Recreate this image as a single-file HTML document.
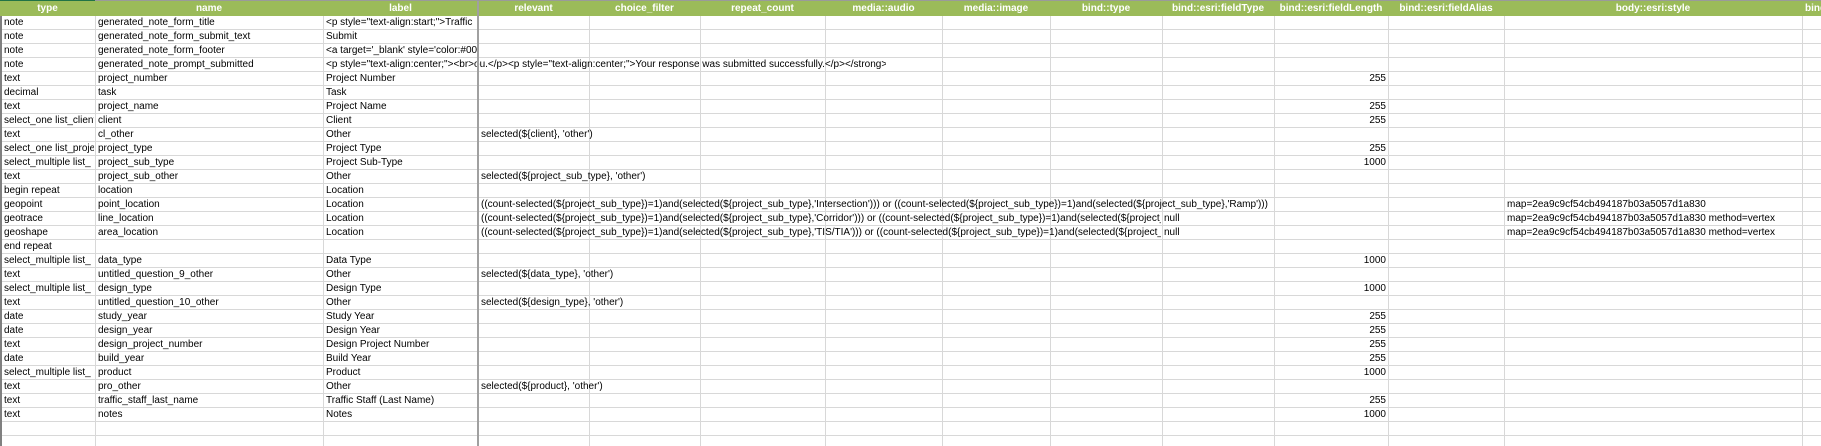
<!DOCTYPE html>
<html><head><meta charset="utf-8"><style>
html,body{margin:0;padding:0;background:#fff;width:1821px;height:446px;overflow:hidden;position:relative}
.h{position:absolute;top:1px;height:15px;background:#9bbb59;color:#fff;font:bold 10px "Liberation Sans",sans-serif;line-height:15px;text-align:center;white-space:nowrap;overflow:hidden}
.v{position:absolute;top:16px;bottom:0;width:1px;background:#d8d8d8}
.t{position:absolute;height:13px;line-height:13px;font:10px "Liberation Sans",sans-serif;color:#000;white-space:nowrap;overflow:hidden}
.r{text-align:right}
#grid{position:absolute;left:0;top:16px;width:1821px;height:430px;background:repeating-linear-gradient(to bottom,transparent 0,transparent 13px,#d8d8d8 13px,#d8d8d8 14px)}
</style></head><body>
<div id="grid"></div>
<div style="position:absolute;left:0;top:0;width:1821px;height:1px;background:#9a9a9a"></div>
<div style="position:absolute;left:0;top:0;width:95px;height:1px;background:#217346"></div>
<div class="h" style="left:0;width:95px">type</div>
<div class="h" style="left:95px;width:228px">name</div>
<div class="h" style="left:323px;width:155px">label</div>
<div class="h" style="left:478px;width:111px">relevant</div>
<div class="h" style="left:589px;width:111px">choice_filter</div>
<div class="h" style="left:700px;width:125px">repeat_count</div>
<div class="h" style="left:825px;width:117px">media::audio</div>
<div class="h" style="left:942px;width:108px">media::image</div>
<div class="h" style="left:1050px;width:112px">bind::type</div>
<div class="h" style="left:1162px;width:112px">bind::esri:fieldType</div>
<div class="h" style="left:1274px;width:114px">bind::esri:fieldLength</div>
<div class="h" style="left:1388px;width:116px">bind::esri:fieldAlias</div>
<div class="h" style="left:1504px;width:298px">body::esri:style</div>
<div class="h" style="left:1802px;width:19px;text-align:left;padding-left:3px">bind</div>
<div class="v" style="left:95px"></div><div class="v" style="left:323px"></div>
<div class="v" style="left:589px"></div><div class="v" style="left:700px"></div><div class="v" style="left:825px"></div>
<div class="v" style="left:942px"></div><div class="v" style="left:1050px"></div><div class="v" style="left:1162px"></div>
<div class="v" style="left:1274px"></div><div class="v" style="left:1388px"></div><div class="v" style="left:1504px"></div><div class="v" style="left:1802px"></div>
<div style="position:absolute;left:0;top:16px;width:2px;bottom:0;background:#808080"></div>

<div class="t" style="left:4px;width:90px;top:17px">note</div>
<div class="t" style="left:4px;width:90px;top:31px">note</div>
<div class="t" style="left:4px;width:90px;top:45px">note</div>
<div class="t" style="left:4px;width:90px;top:59px">note</div>
<div class="t" style="left:4px;width:90px;top:73px">text</div>
<div class="t" style="left:4px;width:90px;top:87px">decimal</div>
<div class="t" style="left:4px;width:90px;top:101px">text</div>
<div class="t" style="left:4px;width:90px;top:115px">select_one list_client</div>
<div class="t" style="left:4px;width:90px;top:129px">text</div>
<div class="t" style="left:4px;width:90px;top:143px">select_one list_project</div>
<div class="t" style="left:4px;width:90px;top:157px">select_multiple list_</div>
<div class="t" style="left:4px;width:90px;top:171px">text</div>
<div class="t" style="left:4px;width:90px;top:185px">begin repeat</div>
<div class="t" style="left:4px;width:90px;top:199px">geopoint</div>
<div class="t" style="left:4px;width:90px;top:213px">geotrace</div>
<div class="t" style="left:4px;width:90px;top:227px">geoshape</div>
<div class="t" style="left:4px;width:90px;top:241px">end repeat</div>
<div class="t" style="left:4px;width:90px;top:255px">select_multiple list_</div>
<div class="t" style="left:4px;width:90px;top:269px">text</div>
<div class="t" style="left:4px;width:90px;top:283px">select_multiple list_</div>
<div class="t" style="left:4px;width:90px;top:297px">text</div>
<div class="t" style="left:4px;width:90px;top:311px">date</div>
<div class="t" style="left:4px;width:90px;top:325px">date</div>
<div class="t" style="left:4px;width:90px;top:339px">text</div>
<div class="t" style="left:4px;width:90px;top:353px">date</div>
<div class="t" style="left:4px;width:90px;top:367px">select_multiple list_</div>
<div class="t" style="left:4px;width:90px;top:381px">text</div>
<div class="t" style="left:4px;width:90px;top:395px">text</div>
<div class="t" style="left:4px;width:90px;top:409px">text</div>

<div class="t" style="left:98px;width:224px;top:17px">generated_note_form_title</div>
<div class="t" style="left:98px;width:224px;top:31px">generated_note_form_submit_text</div>
<div class="t" style="left:98px;width:224px;top:45px">generated_note_form_footer</div>
<div class="t" style="left:98px;width:224px;top:59px">generated_note_prompt_submitted</div>
<div class="t" style="left:98px;width:224px;top:73px">project_number</div>
<div class="t" style="left:98px;width:224px;top:87px">task</div>
<div class="t" style="left:98px;width:224px;top:101px">project_name</div>
<div class="t" style="left:98px;width:224px;top:115px">client</div>
<div class="t" style="left:98px;width:224px;top:129px">cl_other</div>
<div class="t" style="left:98px;width:224px;top:143px">project_type</div>
<div class="t" style="left:98px;width:224px;top:157px">project_sub_type</div>
<div class="t" style="left:98px;width:224px;top:171px">project_sub_other</div>
<div class="t" style="left:98px;width:224px;top:185px">location</div>
<div class="t" style="left:98px;width:224px;top:199px">point_location</div>
<div class="t" style="left:98px;width:224px;top:213px">line_location</div>
<div class="t" style="left:98px;width:224px;top:227px">area_location</div>
<div class="t" style="left:98px;width:224px;top:255px">data_type</div>
<div class="t" style="left:98px;width:224px;top:269px">untitled_question_9_other</div>
<div class="t" style="left:98px;width:224px;top:283px">design_type</div>
<div class="t" style="left:98px;width:224px;top:297px">untitled_question_10_other</div>
<div class="t" style="left:98px;width:224px;top:311px">study_year</div>
<div class="t" style="left:98px;width:224px;top:325px">design_year</div>
<div class="t" style="left:98px;width:224px;top:339px">design_project_number</div>
<div class="t" style="left:98px;width:224px;top:353px">build_year</div>
<div class="t" style="left:98px;width:224px;top:367px">product</div>
<div class="t" style="left:98px;width:224px;top:381px">pro_other</div>
<div class="t" style="left:98px;width:224px;top:395px">traffic_staff_last_name</div>
<div class="t" style="left:98px;width:224px;top:409px">notes</div>

<div class="t" style="left:326px;width:151px;top:17px">&lt;p style="text-align:start;"&gt;Traffic</div>
<div class="t" style="left:326px;width:151px;top:31px">Submit</div>
<div class="t" style="left:326px;width:151px;top:45px">&lt;a target='_blank' style='color:#00</div>
<div class="t" style="left:326px;width:560px;top:59px">&lt;p style="text-align:center;"&gt;&lt;br&gt;ou.&lt;/p&gt;&lt;p style="text-align:center;"&gt;Your response was submitted successfully.&lt;/p&gt;&lt;/strong&gt;&lt;/p&gt;</div>
<div class="t" style="left:326px;width:151px;top:73px">Project Number</div>
<div class="t" style="left:326px;width:151px;top:87px">Task</div>
<div class="t" style="left:326px;width:151px;top:101px">Project Name</div>
<div class="t" style="left:326px;width:151px;top:115px">Client</div>
<div class="t" style="left:326px;width:151px;top:129px">Other</div>
<div class="t" style="left:326px;width:151px;top:143px">Project Type</div>
<div class="t" style="left:326px;width:151px;top:157px">Project Sub-Type</div>
<div class="t" style="left:326px;width:151px;top:171px">Other</div>
<div class="t" style="left:326px;width:151px;top:185px">Location</div>
<div class="t" style="left:326px;width:151px;top:199px">Location</div>
<div class="t" style="left:326px;width:151px;top:213px">Location</div>
<div class="t" style="left:326px;width:151px;top:227px">Location</div>
<div class="t" style="left:326px;width:151px;top:255px">Data Type</div>
<div class="t" style="left:326px;width:151px;top:269px">Other</div>
<div class="t" style="left:326px;width:151px;top:283px">Design Type</div>
<div class="t" style="left:326px;width:151px;top:297px">Other</div>
<div class="t" style="left:326px;width:151px;top:311px">Study Year</div>
<div class="t" style="left:326px;width:151px;top:325px">Design Year</div>
<div class="t" style="left:326px;width:151px;top:339px">Design Project Number</div>
<div class="t" style="left:326px;width:151px;top:353px">Build Year</div>
<div class="t" style="left:326px;width:151px;top:367px">Product</div>
<div class="t" style="left:326px;width:151px;top:381px">Other</div>
<div class="t" style="left:326px;width:151px;top:395px">Traffic Staff (Last Name)</div>
<div class="t" style="left:326px;width:151px;top:409px">Notes</div>

<div class="t" style="left:481px;width:300px;top:129px">selected(${client}, 'other')</div>
<div class="t" style="left:481px;width:300px;top:171px">selected(${project_sub_type}, 'other')</div>
<div class="t" style="left:481px;width:791px;top:199px">((count-selected(${project_sub_type})=1)and(selected(${project_sub_type},'Intersection'))) or ((count-selected(${project_sub_type})=1)and(selected(${project_sub_type},'Ramp')))</div>
<div class="t" style="left:481px;width:680px;top:213px">((count-selected(${project_sub_type})=1)and(selected(${project_sub_type},'Corridor'))) or ((count-selected(${project_sub_type})=1)and(selected(${project_sub_type},'Other')))</div>
<div class="t" style="left:481px;width:680px;top:227px">((count-selected(${project_sub_type})=1)and(selected(${project_sub_type},'TIS/TIA'))) or ((count-selected(${project_sub_type})=1)and(selected(${project_sub_type},'Other')))</div>
<div class="t" style="left:481px;width:300px;top:269px">selected(${data_type}, 'other')</div>
<div class="t" style="left:481px;width:300px;top:297px">selected(${design_type}, 'other')</div>
<div class="t" style="left:481px;width:300px;top:381px">selected(${product}, 'other')</div>

<div class="t" style="left:1164px;width:100px;top:213px">null</div>
<div class="t" style="left:1164px;width:100px;top:227px">null</div>

<div class="t r" style="left:1276px;width:110px;top:73px">255</div>
<div class="t r" style="left:1276px;width:110px;top:101px">255</div>
<div class="t r" style="left:1276px;width:110px;top:115px">255</div>
<div class="t r" style="left:1276px;width:110px;top:143px">255</div>
<div class="t r" style="left:1276px;width:110px;top:157px">1000</div>
<div class="t r" style="left:1276px;width:110px;top:255px">1000</div>
<div class="t r" style="left:1276px;width:110px;top:283px">1000</div>
<div class="t r" style="left:1276px;width:110px;top:311px">255</div>
<div class="t r" style="left:1276px;width:110px;top:325px">255</div>
<div class="t r" style="left:1276px;width:110px;top:339px">255</div>
<div class="t r" style="left:1276px;width:110px;top:353px">255</div>
<div class="t r" style="left:1276px;width:110px;top:367px">1000</div>
<div class="t r" style="left:1276px;width:110px;top:395px">255</div>
<div class="t r" style="left:1276px;width:110px;top:409px">1000</div>

<div class="t" style="left:1507px;width:294px;top:199px">map=2ea9c9cf54cb494187b03a5057d1a830</div>
<div class="t" style="left:1507px;width:294px;top:213px">map=2ea9c9cf54cb494187b03a5057d1a830 method=vertex</div>
<div class="t" style="left:1507px;width:294px;top:227px">map=2ea9c9cf54cb494187b03a5057d1a830 method=vertex</div>

<div style="position:absolute;left:477px;top:1px;width:2px;bottom:0;background:#a0a0a0"></div>
</body></html>
